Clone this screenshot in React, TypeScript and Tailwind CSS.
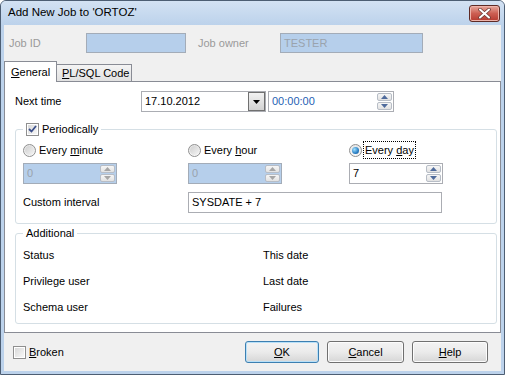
import type { ReactNode } from 'react';

function SpinButtons({ disabled }: { disabled?: boolean }) {
  const arrow = disabled ? '#a6a6a6' : '#4f6b9c';
  return (
    <div className="flex flex-col gap-[1px] w-[15px] h-[17px] my-auto mr-[1px]">
      {[0, 1].map((i) => (
        <div
          key={i}
          className="flex-1 flex items-center justify-center border border-[#b7bdc6] rounded-[2px] bg-gradient-to-b from-[#f6f6f6] to-[#e2e2e2]"
        >
          <svg width="7" height="4" viewBox="0 0 7 4">
            <path d={i === 0 ? 'M0 4 L3.5 0 L7 4 Z' : 'M0 0 L3.5 4 L7 0 Z'} fill={arrow} />
          </svg>
        </div>
      ))}
    </div>
  );
}

function SpinEdit({ value, disabled, width }: { value: string; disabled?: boolean; width: string }) {
  return (
    <div
      className={`flex h-[21px] border ${width} ${
        disabled ? 'bg-[#b6cfeb] border-[#a3acb8] text-[#9aa3ad]' : 'bg-white border-[#abadb3] text-black'
      }`}
    >
      <div className="flex-1 flex items-center pl-[3px]">{value}</div>
      <SpinButtons disabled={disabled} />
    </div>
  );
}

function Radio({ checked }: { checked?: boolean }) {
  return (
    <div className="w-[13px] h-[13px] rounded-full border border-[#8f8f8f] bg-gradient-to-b from-[#e6e6e6] to-[#f8f8f8] flex items-center justify-center">
      {checked ? (
        <div className="w-[7px] h-[7px] rounded-full bg-[radial-gradient(circle_at_35%_35%,#9fe0ff,#2a7fc4_60%,#154f8c)]" />
      ) : (
        <div className="w-[9px] h-[9px] rounded-full bg-gradient-to-br from-[#cfcfcf] to-[#f4f4f4]" />
      )}
    </div>
  );
}

function CheckBox({ checked }: { checked?: boolean }) {
  return (
    <div className="w-[13px] h-[13px] border border-[#8f8f8f] bg-white p-[1px]">
      <div className="w-full h-full bg-gradient-to-br from-[#d9d9d9] to-[#f7f7f7] flex items-center justify-center">
        {checked && (
          <svg width="9" height="8" viewBox="0 0 9 8">
            <path d="M1 4 L3.5 6.5 L8 1" fill="none" stroke="#3b4f8a" strokeWidth="1.8" />
          </svg>
        )}
      </div>
    </div>
  );
}

function Group({ title, className, children }: { title: ReactNode; className: string; children: ReactNode }) {
  return (
    <div className={`relative ml-[10px] mr-[3px] border border-[#d5dfe5] rounded-[3px] ${className}`}>
      <div className="absolute left-[7px] top-[-8px] px-[3px] bg-white flex items-center gap-[3px] h-[14px]">
        {title}
      </div>
      {children}
    </div>
  );
}

function Button({ children, focused }: { children: ReactNode; focused?: boolean }) {
  return (
    <div
      className={`h-[22px] flex items-center justify-center rounded-[3px] border bg-gradient-to-b from-[#f3f3f3] via-[#ebebeb] to-[#d6d6d6] ${
        focused ? 'border-[#3c7fb1] shadow-[inset_0_0_0_1px_#b8e0f8]' : 'border-[#707070] shadow-[inset_0_0_0_1px_#fcfcfc]'
      }`}
    >
      {children}
    </div>
  );
}

export default function App() {
  return (
    <div className="w-[505px] h-[375px] flex flex-col overflow-hidden border border-[#4d5e73] rounded-t-[6px] bg-[#bcd2eb] font-['Liberation_Sans',Arial,sans-serif] text-[11px] text-black">
      {/* title bar */}
      <div className="h-[24px] flex items-center justify-between pl-[7px] pr-[4px] bg-gradient-to-b from-[#d3e2f3] to-[#bcd2eb]">
        <span className="text-[11.5px] text-black">Add New Job to 'ORTOZ'</span>
        <div className="w-[31px] h-[17px] mt-[1px] rounded-[3px] border border-[#5e2a25] bg-gradient-to-b from-[#e6a89e] via-[#cc5e52] to-[#b6392f] flex items-center justify-center shadow-[inset_0_0_0_1px_#eeb4ab]">
          <svg width="13" height="11" viewBox="0 0 13 11">
            <path d="M2 1.5 L11 9.5 M11 1.5 L2 9.5" stroke="#6e3c37" strokeWidth="3.6" strokeLinecap="round" />
            <path d="M2 1.5 L11 9.5 M11 1.5 L2 9.5" stroke="#ffffff" strokeWidth="2" strokeLinecap="round" />
          </svg>
        </div>
      </div>

      {/* client area */}
      <div className="flex-1 mx-[3px] mb-[3px] bg-[#f0f0f0] flex flex-col">
        {/* job row */}
        <div className="mt-[8px] h-[20px] flex items-center pl-[5px]">
          <span className="w-[77px] text-[#9a9a9a]">Job ID</span>
          <div className="w-[100px] h-[20px] bg-[#b6cfeb] border border-[#a3acb8]" />
          <span className="ml-[12px] w-[82px] text-[#9a9a9a]">Job owner</span>
          <div className="w-[143px] h-[20px] bg-[#b6cfeb] border border-[#a3acb8] flex items-center pl-[3px] text-[#9aa3ad]">
            TESTER
          </div>
        </div>

        {/* tabs */}
        <div className="mt-[8px] h-[20px] flex items-end">
          <div className="relative z-10 mb-[-1px] w-[53px] h-[21px] bg-white border border-b-0 border-[#898c95] flex items-center pl-[6px]">
            <span>
              <span className="underline">G</span>eneral
            </span>
          </div>
          <div className="w-[75px] h-[17px] border border-l-0 border-b-0 border-[#898c95] bg-gradient-to-b from-[#f4f4f4] to-[#e1e1e1] flex items-center pl-[5px]">
            <span>
              <span className="underline">P</span>L/SQL Code
            </span>
          </div>
        </div>

        {/* tab page */}
        <div className="h-[252px] bg-white border border-[#898c95] flex flex-col">
          <div className="mt-[9px] h-[21px] flex items-center pl-[10px]">
            <span className="w-[126px]">Next time</span>
            <div className="w-[125px] h-[21px] flex border border-[#abadb3] bg-white">
              <div className="flex-1 flex items-center pl-[3px]">17.10.2012</div>
              <div className="w-[17px] h-[19px] border border-[#707070] bg-gradient-to-b from-[#f2f2f2] to-[#d2d2d2] flex items-center justify-center">
                <svg width="7" height="4" viewBox="0 0 7 4">
                  <path d="M0 0 L3.5 4 L7 0 Z" fill="#000" />
                </svg>
              </div>
            </div>
            <div className="ml-[2px] w-[126px] h-[21px] flex border border-[#abadb3] bg-white">
              <div className="flex-1 flex items-center pl-[3px] text-[#1f5fb4]">00:00:00</div>
              <SpinButtons />
            </div>
          </div>

          <Group
            className="mt-[17px] h-[95px]"
            title={
              <>
                <CheckBox checked />
                <span>Periodically</span>
              </>
            }
          >
            <div className="pt-[13px] pl-[7px] flex flex-col">
              <div className="h-[14px] flex items-center">
                <div className="w-[165px] flex items-center gap-[3px]">
                  <Radio />
                  <span>
                    Every <span className="underline">m</span>inute
                  </span>
                </div>
                <div className="w-[161px] flex items-center gap-[3px]">
                  <Radio />
                  <span>
                    Every <span className="underline">h</span>our
                  </span>
                </div>
                <div className="flex items-center gap-[2px]">
                  <Radio checked />
                  <span className="outline outline-1 outline-dotted outline-black px-[1px]">
                    Every <span className="underline">d</span>ay
                  </span>
                </div>
              </div>
              <div className="mt-[6px] flex">
                <div className="w-[165px]">
                  <SpinEdit value="0" disabled width="w-[94px]" />
                </div>
                <div className="w-[161px]">
                  <SpinEdit value="0" disabled width="w-[94px]" />
                </div>
                <SpinEdit value="7" width="w-[94px]" />
              </div>
              <div className="mt-[8px] h-[21px] flex items-center">
                <span className="w-[165px]">Custom interval</span>
                <div className="w-[254px] h-[21px] border border-[#abadb3] flex items-center pl-[3px]">SYSDATE + 7</div>
              </div>
            </div>
          </Group>

          <Group className="mt-[9px] h-[91px]" title={<span>Additional</span>}>
            <div className="pt-[8px] pl-[7px] grid grid-cols-[240px_1fr] auto-rows-[26px] items-center">
              <span>Status</span>
              <span>This date</span>
              <span>Privilege user</span>
              <span>Last date</span>
              <span>Schema user</span>
              <span>Failures</span>
            </div>
          </Group>
        </div>

        {/* bottom */}
        <div className="mt-[8px] h-[22px] flex items-center pl-[9px] pr-[13px]">
          <CheckBox />
          <span className="ml-[3px]">
            <span className="underline">B</span>roken
          </span>
          <div className="ml-auto flex gap-[8px]">
            <div className="w-[74px]">
              <Button focused>
                <span className="underline">O</span>K
              </Button>
            </div>
            <div className="w-[77px]">
              <Button>
                <span className="underline">C</span>ancel
              </Button>
            </div>
            <div className="w-[76px]">
              <Button>
                <span className="underline">H</span>elp
              </Button>
            </div>
          </div>
        </div>
      </div>
    </div>
  );
}
